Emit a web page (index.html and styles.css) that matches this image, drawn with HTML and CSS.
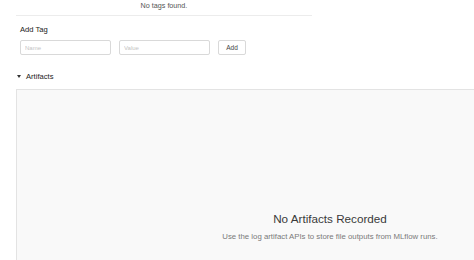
FILE: index.html
```html
<!DOCTYPE html>
<html lang="en">
<head>
    <meta charset="UTF-8">
    <title>Run - Artifacts</title>
    <link rel="stylesheet" href="styles.css">
</head>
<body>
    <div class="page">
        <div class="tags-table">
            <div class="empty-row">No tags found.</div>
        </div>

        <div class="add-tag">
            <h4>Add Tag</h4>
            <form class="tag-form">
                <input type="text" class="tag-input" placeholder="Name">
                <input type="text" class="tag-input" placeholder="Value">
                <button type="button" class="add-btn">Add</button>
            </form>
        </div>

        <div class="section-title">
            <span class="caret"></span>
            <span>Artifacts</span>
        </div>

        <div class="artifacts-box">
            <div class="empty-state">
                <h2>No Artifacts Recorded</h2>
                <p>Use the log artifact APIs to store file outputs from MLflow runs.</p>
            </div>
        </div>
    </div>
</body>
</html>
```

FILE: styles.css
```css
* {
    margin: 0;
    padding: 0;
    box-sizing: border-box;
}

body {
    font-family: 'Liberation Sans', Arial, Helvetica, sans-serif;
    background: white;
    color: #333;
    overflow: hidden;
}

.page {
    padding-left: 16px;
    width: 660px;
}

.tags-table {
    width: 296px;
    border-bottom: 1px solid #ececec;
}

.empty-row {
    height: 15px;
    line-height: 12px;
    font-size: 7.2px;
    color: #555;
    text-align: center;
}

.add-tag {
    padding-left: 4px;
    margin-top: 9px;
}

.add-tag h4 {
    font-size: 7.6px;
    font-weight: normal;
    color: #222;
    line-height: 10px;
}

.tag-form {
    display: flex;
    align-items: center;
    margin-top: 5px;
}

.tag-input {
    width: 91px;
    height: 15px;
    border: 1px solid #d9d9d9;
    border-radius: 2px;
    padding: 0 4px;
    font-family: inherit;
    font-size: 6px;
    margin-right: 8px;
}

.tag-input::placeholder {
    color: #c4c4c4;
}

.add-btn {
    width: 28px;
    height: 15px;
    border: 1px solid #d9d9d9;
    border-radius: 2px;
    background: white;
    font-family: inherit;
    font-size: 6.5px;
    color: #444;
}

.section-title {
    display: flex;
    align-items: center;
    margin-top: 16px;
    height: 10px;
    font-size: 7.6px;
    color: #222;
}

.caret {
    width: 0;
    height: 0;
    border-left: 2.5px solid transparent;
    border-right: 2.5px solid transparent;
    border-top: 3px solid #333;
    margin: 0 5px 0 1px;
}

.artifacts-box {
    margin-top: 8px;
    width: 628px;
    height: 200px;
    background: #f9f9f9;
    border: 1px solid #e3e3e3;
}

.empty-state {
    padding-top: 122px;
    text-align: center;
}

.empty-state h2 {
    font-size: 11.7px;
    font-weight: normal;
    color: #3a3a3a;
    line-height: 14px;
}

.empty-state p {
    margin-top: 6px;
    font-size: 7.8px;
    color: #7a7a7a;
    line-height: 9px;
}
```
